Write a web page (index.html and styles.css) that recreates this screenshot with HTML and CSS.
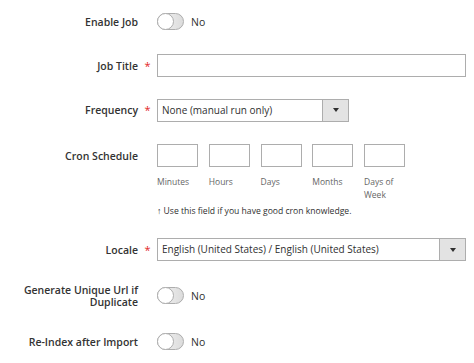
FILE: index.html
```html
<!DOCTYPE html>
<html>
<head>
<meta charset="utf-8">
<link rel="stylesheet" href="styles.css">
</head>
<body>
<form class="form">
  <div class="row row-first">
    <div class="label">Enable Job</div>
    <div class="req"></div>
    <div class="control">
      <span class="toggle"><span class="knob"></span></span>
      <span class="toggle-text">No</span>
    </div>
  </div>

  <div class="row">
    <div class="label">Job Title</div>
    <div class="req">*</div>
    <div class="control">
      <input class="input full" type="text">
    </div>
  </div>

  <div class="row row-freq">
    <div class="label">Frequency</div>
    <div class="req">*</div>
    <div class="control">
      <div class="select freq">
        <span class="select-value">None (manual run only)</span>
        <span class="select-btn"><span class="arrow"></span></span>
      </div>
    </div>
  </div>

  <div class="row row-top row-cron">
    <div class="label label-cron">Cron Schedule</div>
    <div class="req"></div>
    <div class="control control-col">
      <div class="cron">
        <div class="cron-item"><span class="box"></span><span class="cron-label">Minutes</span></div>
        <div class="cron-item"><span class="box"></span><span class="cron-label">Hours</span></div>
        <div class="cron-item"><span class="box"></span><span class="cron-label">Days</span></div>
        <div class="cron-item"><span class="box"></span><span class="cron-label">Months</span></div>
        <div class="cron-item"><span class="box"></span><span class="cron-label">Days of Week</span></div>
      </div>
      <div class="hint">↑ Use this field if you have good cron knowledge.</div>
    </div>
  </div>

  <div class="row row-locale">
    <div class="label">Locale</div>
    <div class="req">*</div>
    <div class="control">
      <div class="select full">
        <span class="select-value">English (United States) / English (United States)</span>
        <span class="select-btn"><span class="arrow"></span></span>
      </div>
    </div>
  </div>

  <div class="row row-gen">
    <div class="label">Generate Unique Url if Duplicate</div>
    <div class="req"></div>
    <div class="control">
      <span class="toggle"><span class="knob"></span></span>
      <span class="toggle-text">No</span>
    </div>
  </div>

  <div class="row row-last">
    <div class="label">Re-Index after Import</div>
    <div class="req"></div>
    <div class="control">
      <span class="toggle"><span class="knob"></span></span>
      <span class="toggle-text">No</span>
    </div>
  </div>
</form>
</body>
</html>
```
FILE: styles.css
```css
html, body {
  margin: 0;
  padding: 0;
  background: #ffffff;
}
body {
  font-family: "Open Sans", "Liberation Sans", sans-serif;
  color: #303030;
  width: 474px;
  height: 363px;
  overflow: hidden;
}
.form {
  display: flex;
  flex-direction: column;
  padding: 10px 8px 0 0;
}
.row {
  display: grid;
  grid-template-columns: 138px 19px 1fr;
  align-items: center;
  min-height: 23px;
}
.row + .row { margin-top: 21px; }
.row-freq { margin-top: 21.5px !important; }
.row-cron { margin-top: 22px !important; }
.row-locale { margin-top: 21.5px !important; }
.row-gen { margin-top: 22.5px !important; }
.row-last { margin-top: 22.5px !important; }
.row-top { align-items: start; }
.label {
  text-align: right;
  font-size: 10.5px;
  font-weight: 600;
  line-height: 12px;
  color: #333333;
}
.label-cron { padding-top: 6px; }
.req {
  color: #e22626;
  font-size: 11px;
  text-align: center;
  line-height: 12px;
}
.control {
  display: flex;
  align-items: center;
  font-size: 10px;
}
.control-col {
  flex-direction: column;
  align-items: flex-start;
}
.toggle {
  position: relative;
  display: inline-block;
  width: 27px;
  height: 17px;
  box-sizing: border-box;
  border: 1px solid #adadad;
  border-radius: 9px;
  background: linear-gradient(to right, #f4f4f4, #dcdcdc);
}
.knob {
  position: absolute;
  left: -1px;
  top: -1px;
  width: 17px;
  height: 17px;
  box-sizing: border-box;
  border-radius: 50%;
  background: #ffffff;
  border: 1px solid #adadad;
}
.toggle-text {
  margin-left: 7px;
  font-size: 10.5px;
  color: #303030;
}
.input {
  box-sizing: border-box;
  height: 23px;
  border: 1px solid #adadad;
  margin: 0;
  padding: 0 5px;
  font: inherit;
  background: #fff;
}
.full { width: 309px; }
.select {
  box-sizing: border-box;
  display: flex;
  height: 23px;
  border: 1px solid #adadad;
  background: #fff;
}
.freq { width: 192px; }
.select-value {
  flex: 1;
  padding-left: 4px;
  line-height: 21px;
  font-size: 10px;
  color: #303030;
  white-space: nowrap;
  overflow: hidden;
}
.select-btn {
  width: 25px;
  border-left: 1px solid #adadad;
  background: #e3e3e3;
  display: flex;
  align-items: center;
  justify-content: center;
}
.arrow {
  width: 0;
  height: 0;
  border-left: 3px solid transparent;
  border-right: 3px solid transparent;
  border-top: 4px solid #303030;
}
.cron {
  display: flex;
  gap: 10.75px;
}
.cron-item {
  width: 41px;
  display: flex;
  flex-direction: column;
}
.box {
  box-sizing: border-box;
  width: 41px;
  height: 23px;
  border: 1px solid #adadad;
  background: #fff;
}
.cron-label {
  margin-top: 8px;
  font-size: 8.5px;
  line-height: 13px;
  color: #666666;
}
.hint {
  margin-top: 4px;
  font-size: 8.6px;
  line-height: 12px;
  color: #303030;
}
```
